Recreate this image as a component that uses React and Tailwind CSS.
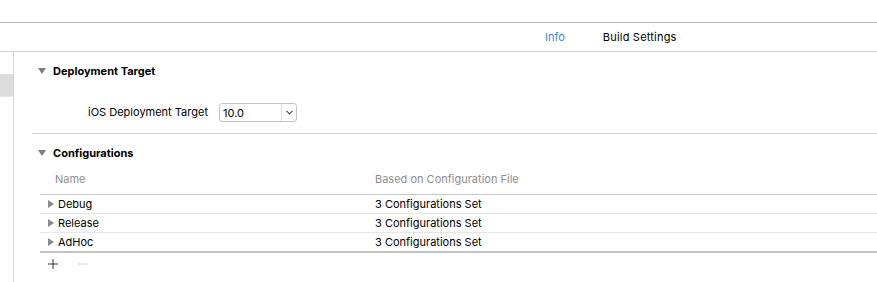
function Disclosure({ open }) {
  return open ? (
    <svg width="8" height="6" viewBox="0 0 8 6" className="shrink-0">
      <path d="M0 0 L8 0 L4 6 Z" fill="#7d7d7d" />
    </svg>
  ) : (
    <svg width="6" height="8" viewBox="0 0 6 8" className="shrink-0">
      <path d="M0 0 L6 4 L0 8 Z" fill="#8a8a8a" />
    </svg>
  );
}

function SectionHeader({ title }) {
  return (
    <div className="h-[38px] flex items-center pl-[24px] gap-[7px]">
      <Disclosure open />
      <span className="text-[11px] font-bold text-black">{title}</span>
    </div>
  );
}

const configs = ["Debug", "Release", "AdHoc"];

export default function App() {
  return (
    <div
      className="w-[877px] h-[282px] bg-white overflow-hidden text-black flex flex-col"
      style={{ fontFamily: 'Inter, "Liberation Sans", Arial, sans-serif' }}
    >
      <div className="h-[23px] shrink-0 border-b border-[#b4b4b4]" />

      <div className="h-[29px] shrink-0 border-b border-[#d2d2d2] flex items-center text-[11px]">
        <span className="ml-[545px] text-[#3a86dd]">Info</span>
        <span className="ml-[38px] tracking-[0.2px]">Build Settings</span>
      </div>

      <div className="flex flex-1 min-h-0">
        <div className="w-[14px] shrink-0 border-r border-[#d6d6d6] pt-[22px]">
          <div className="h-[22px] bg-[#dcdcdc]" />
          <div className="h-px bg-[#e4e4e4]" />
        </div>

        <div className="flex-1 min-w-0">
          <SectionHeader title="Deployment Target" />

          <div className="mt-[13px] h-[19px] flex items-center">
            <span className="w-[194px] text-right text-[11px]">iOS Deployment Target</span>
            <div className="ml-[11px] w-[78px] h-[19px] border border-[#c4c4c4] rounded-[3px] flex items-stretch bg-white">
              <span className="flex-1 text-[11px] pl-[3px] flex items-center pt-px">10.0</span>
              <div className="w-[15px] border-l border-[#dedede] flex items-center justify-center">
                <svg width="7" height="5" viewBox="0 0 7 5">
                  <path d="M0.5 0.8 L3.5 3.8 L6.5 0.8" fill="none" stroke="#555" strokeWidth="1.2" />
                </svg>
              </div>
            </div>
          </div>

          <div className="mt-[11px] ml-[18px] h-px bg-[#d5d5d5]" />

          <SectionHeader title="Configurations" />

          <div className="ml-[26px]">
            <div className="h-[23px] pb-[7px] flex items-center text-[11px] text-[#8e8e8e] border-b border-[#c8c8c8]">
              <span className="pl-[15px] w-[335px]">Name</span>
              <span>Based on Configuration File</span>
            </div>
            {configs.map((name, i) => (
              <div
                key={name}
                className={
                  i === configs.length - 1
                    ? "h-[20px] flex items-center text-[11px] border-b-2 border-[#c2c2c2]"
                    : "h-[19px] flex items-center text-[11px] border-b border-[#e6e6e6]"
                }
              >
                <span className="w-[335px] flex items-center pl-[8px] gap-[4px]">
                  <Disclosure />
                  <span>{name}</span>
                </span>
                <span>3 Configurations Set</span>
              </div>
            ))}
            <div className="h-[22px] flex items-center pl-[8px] gap-[20px]">
              <svg width="10" height="10" viewBox="0 0 10 10">
                <path d="M5 0 V10 M0 5 H10" stroke="#333" strokeWidth="1" />
              </svg>
              <svg width="10" height="10" viewBox="0 0 10 10">
                <path d="M0 5 H10" stroke="#d4d4d4" strokeWidth="1" />
              </svg>
            </div>
          </div>
        </div>
      </div>
    </div>
  );
}
